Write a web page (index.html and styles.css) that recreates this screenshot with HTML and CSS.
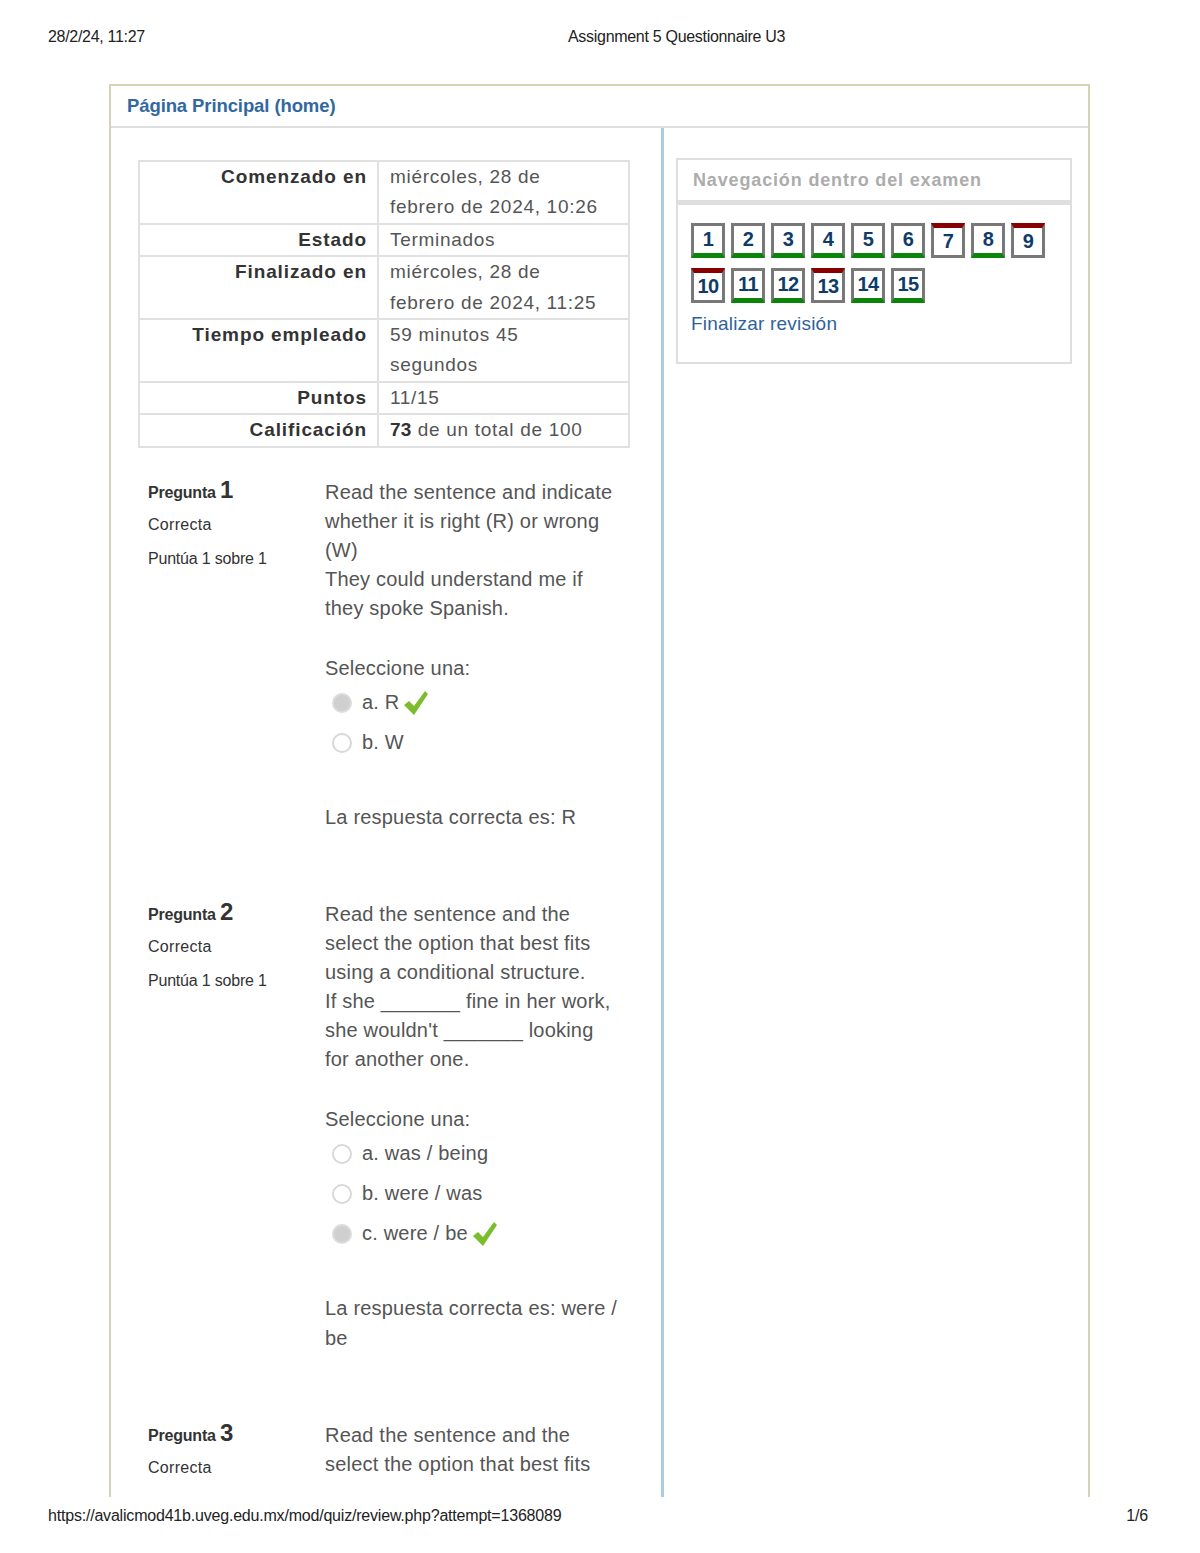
FILE: index.html
```html
<!DOCTYPE html>
<html lang="es">
<head>
  <meta charset="UTF-8" />
  <title>Assignment 5 Questionnaire U3</title>
  <link rel="stylesheet" href="styles.css">
</head>
<body>

  <!-- Print header -->
  <div class="print-head">
    <span class="print-date">28/2/24, 11:27</span>
    <span class="print-title">Assignment 5 Questionnaire U3</span>
  </div>

  <div class="frame">
    <div class="frame-header">
      <a class="home-link" href="#">Página Principal (home)</a>
    </div>

    <div class="frame-body">
      <!-- Main column -->
      <div class="main-col">
        <table class="summary">
          <tr><th>Comenzado en</th><td>miércoles, 28 de febrero de 2024, 10:26</td></tr>
          <tr><th>Estado</th><td>Terminados</td></tr>
          <tr><th>Finalizado en</th><td>miércoles, 28 de febrero de 2024, 11:25</td></tr>
          <tr><th>Tiempo empleado</th><td>59 minutos 45 segundos</td></tr>
          <tr><th>Puntos</th><td>11/15</td></tr>
          <tr><th>Calificación</th><td><b>73</b> de un total de 100</td></tr>
        </table>

        <div class="question">
          <div class="q-info">
            <div class="q-no">Pregunta <span class="num">1</span></div>
            <div class="q-state">Correcta</div>
            <div class="q-grade">Puntúa 1 sobre 1</div>
          </div>
          <div class="q-content">
            <div class="q-text">Read the sentence and indicate whether it is right (R) or wrong (W)<br>They could understand me if they spoke Spanish.</div>
            <div class="prompt">Seleccione una:</div>
            <div class="answers">
              <div class="option"><span class="radio checked"></span>a. R
                <svg class="tick" viewBox="0 0 26 26"><path d="M1 15 L6 11 L11 16 L22 1 L25 4 L11 25 Z" fill="#7cbd2b"/></svg>
              </div>
              <div class="option"><span class="radio"></span>b. W</div>
            </div>
            <div class="right-answer">La respuesta correcta es: R</div>
          </div>
        </div>

        <div class="question">
          <div class="q-info">
            <div class="q-no">Pregunta <span class="num">2</span></div>
            <div class="q-state">Correcta</div>
            <div class="q-grade">Puntúa 1 sobre 1</div>
          </div>
          <div class="q-content">
            <div class="q-text">Read the sentence and the select the option that best fits using a conditional structure.<br>If she _______ fine in her work, she wouldn't _______ looking for another one.</div>
            <div class="prompt">Seleccione una:</div>
            <div class="answers">
              <div class="option"><span class="radio"></span>a. was / being</div>
              <div class="option"><span class="radio"></span>b. were / was</div>
              <div class="option"><span class="radio checked"></span>c. were / be
                <svg class="tick" viewBox="0 0 26 26"><path d="M1 15 L6 11 L11 16 L22 1 L25 4 L11 25 Z" fill="#7cbd2b"/></svg>
              </div>
            </div>
            <div class="right-answer">La respuesta correcta es: were / be</div>
          </div>
        </div>

        <!-- cut by the page break -->
        <div class="question">
          <div class="q-info">
            <div class="q-no">Pregunta <span class="num">3</span></div>
            <div class="q-state">Correcta</div>
          </div>
          <div class="q-content">
            <div class="q-text">Read the sentence and the select the option that best fits</div>
          </div>
        </div>
      </div>

      <!-- Side column -->
      <div class="side-col">
        <div class="nav-block">
          <div class="nav-title">Navegación dentro del examen</div>
          <div class="nav-content">
            <div class="nav-buttons">
              <a class="qbtn correct" href="#">1</a>
              <a class="qbtn correct" href="#">2</a>
              <a class="qbtn correct" href="#">3</a>
              <a class="qbtn correct" href="#">4</a>
              <a class="qbtn correct" href="#">5</a>
              <a class="qbtn correct" href="#">6</a>
              <a class="qbtn wrong" href="#">7</a>
              <a class="qbtn correct" href="#">8</a>
              <a class="qbtn wrong" href="#">9</a>
              <a class="qbtn wrong" href="#">10</a>
              <a class="qbtn correct" href="#">11</a>
              <a class="qbtn correct" href="#">12</a>
              <a class="qbtn wrong" href="#">13</a>
              <a class="qbtn correct" href="#">14</a>
              <a class="qbtn correct" href="#">15</a>
            </div>
            <a class="finish" href="#">Finalizar revisión</a>
          </div>
        </div>
      </div>
    </div>
  </div>

  <!-- Print footer -->
  <div class="print-foot">
    <span>https://avalicmod41b.uveg.edu.mx/mod/quiz/review.php?attempt=1368089</span>
    <span>1/6</span>
  </div>

</body>
</html>
```

FILE: styles.css
```css
* {
  box-sizing: border-box;
}

body {
  margin: 0;
  width: 1200px;
  height: 1553px;
  overflow: hidden;
  background: #fff;
  font-family: 'Liberation Sans', Arial, sans-serif;
  color: #333;
}

a {
  text-decoration: none;
}

/* Print header / footer */
.print-head {
  height: 74px;
  margin-bottom: 10px;
  padding-left: 48px;
  display: flex;
  align-items: center;
  font-size: 16px;
  color: #222;
  letter-spacing: -0.3px;
}

.print-date {
  width: 520px;
}

.print-foot {
  height: 38px;
  padding: 0 52px 0 48px;
  display: flex;
  justify-content: space-between;
  align-items: center;
  font-size: 16px;
  color: #222;
  letter-spacing: -0.2px;
}

/* Page frame */
.frame {
  margin-left: 109px;
  width: 981px;
  height: 1413px;
  border-left: 2px solid #d6d2b4;
  border-right: 2px solid #d6d2b4;
  overflow: hidden;
  display: flex;
  flex-direction: column;
}

.frame-header {
  height: 44px;
  flex-shrink: 0;
  border-top: 2px solid #d6d2b4;
  border-bottom: 2px solid #dedede;
  padding-left: 16px;
  display: flex;
  align-items: center;
}

.home-link {
  color: #31689f;
  font-weight: bold;
  font-size: 18.5px;
  letter-spacing: -0.1px;
}

.frame-body {
  flex: 1;
  display: flex;
}

.main-col {
  width: 553px;
  flex-shrink: 0;
  border-right: 3px solid #a9cbe6;
  padding: 32px 0 0 27px;
}

.side-col {
  flex: 1;
  padding: 30px 13px 0 12px;
}

/* Summary table */
.summary {
  width: 492px;
  border-collapse: collapse;
  font-size: 19px;
  line-height: 30.4px;
  border: 2px solid #e1e1e1;
}

.summary th,
.summary td {
  border: 2px solid #e1e1e1;
  vertical-align: top;
}

.summary th {
  width: 239px;
  padding: 0 10px 0 11px;
  text-align: right;
  color: #333;
  letter-spacing: 0.9px;
}

.summary td {
  padding: 0 28px 0 11px;
  color: #555;
  letter-spacing: 0.7px;
}

.summary td b {
  color: #333;
  letter-spacing: 0.3px;
}

/* Questions */
.question {
  display: flex;
  margin-top: 29px;
}

.question + .question {
  margin-top: 67px;
}

.q-info {
  width: 187px;
  flex-shrink: 0;
  padding-left: 10px;
  font-size: 16px;
  color: #333;
}

.q-no {
  font-weight: bold;
  line-height: 26px;
  letter-spacing: -0.2px;
}

.q-no .num {
  font-size: 24px;
}

.q-state {
  margin-top: 9px;
  line-height: 20px;
  letter-spacing: 0.3px;
}

.q-grade {
  margin-top: 14px;
  line-height: 20px;
  letter-spacing: -0.2px;
}

.q-content {
  width: 293px;
  font-size: 20px;
  color: #555;
  letter-spacing: 0.2px;
}

.q-text {
  line-height: 29px;
  padding-top: 1px;
}

.prompt {
  margin-top: 30px;
  line-height: 30px;
}

.option {
  height: 40px;
  display: flex;
  align-items: center;
  padding-left: 7px;
}

.radio {
  width: 20px;
  height: 20px;
  border-radius: 50%;
  border: 2px solid #d8d8d8;
  background: #fff;
  margin-right: 10px;
  flex-shrink: 0;
}

.radio.checked {
  background: #cfcfcf;
  border-color: #dcdcdc;
}

.tick {
  width: 26px;
  height: 26px;
  margin-left: 4px;
}

.right-answer {
  margin-top: 39px;
  line-height: 30px;
}

/* Quiz navigation block */
.nav-block {
  width: 396px;
}

.nav-title {
  height: 44px;
  border: 2px solid #dedede;
  padding-left: 15px;
  display: flex;
  align-items: center;
  font-size: 18px;
  font-weight: bold;
  color: #acacac;
  letter-spacing: 0.85px;
}

.nav-content {
  border: 2px solid #dedede;
  border-top-width: 3px;
  padding: 18px 13px 25px;
}

.nav-buttons {
  display: flex;
  flex-wrap: wrap;
  gap: 10px 6px;
}

.qbtn {
  width: 34px;
  height: 35px;
  border: 3px solid #787878;
  background: #fff;
  color: #0e3c6a;
  font-weight: bold;
  font-size: 20px;
  display: flex;
  align-items: center;
  justify-content: center;
  letter-spacing: -0.5px;
}

.qbtn.correct {
  border-bottom: 5px solid #0a850a;
}

.qbtn.wrong {
  border-top: 5px solid #880000;
}

.finish {
  display: block;
  margin-top: 8px;
  font-size: 19px;
  line-height: 26px;
  color: #2f629a;
  letter-spacing: 0.2px;
}
```
